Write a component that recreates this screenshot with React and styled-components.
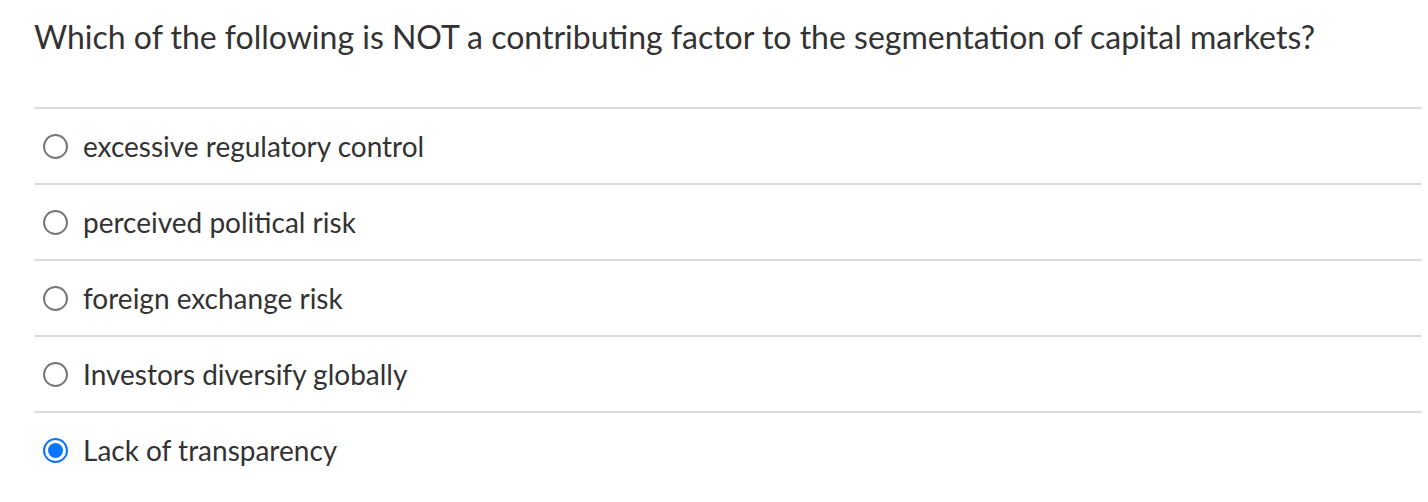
import React, { useState } from "react"
import styled, { createGlobalStyle } from "styled-components"

const GlobalStyle = createGlobalStyle`
  body {
    margin: 0;
    background: #ffffff;
    font-family: Lato, "Open Sans", sans-serif;
    color: #2d3b45;
  }
`

const Page = styled.div`
  padding: 0 6px 0 34px;
`

const Question = styled.h1`
  margin: 0;
  padding-top: 18px;
  height: 107px;
  box-sizing: border-box;
  font-size: 32px;
  line-height: 38px;
  font-weight: 400;
  color: #333333;
`

const Options = styled.div`
  display: flex;
  flex-direction: column;
`

const Row = styled.label`
  display: flex;
  align-items: center;
  gap: 15px;
  height: 76px;
  box-sizing: border-box;
  border-top: 2px solid #dddddd;
  padding-left: 9px;
  cursor: pointer;
`

const Radio = styled.span`
  width: 25px;
  height: 25px;
  box-sizing: border-box;
  border-radius: 50%;
  border: 2px solid ${props => (props.checked ? "#0b74ff" : "#777777")};
  display: flex;
  align-items: center;
  justify-content: center;
  flex-shrink: 0;
  &::after {
    content: "";
    width: 15px;
    height: 15px;
    border-radius: 50%;
    background: ${props => (props.checked ? "#0b74ff" : "transparent")};
  }
`

const Label = styled.span`
  font-size: 28px;
  color: #333333;
  line-height: 32px;
`

const answers = [
  "excessive regulatory control",
  "perceived political risk",
  "foreign exchange risk",
  "Investors diversify globally",
  "Lack of transparency",
]

const App = () => {
  const [selected, setSelected] = useState(4)

  return (
    <Page>
      <GlobalStyle />
      <Question>
        Which of the following is NOT a contributing factor to the segmentation
        of capital markets?
      </Question>
      <Options>
        {answers.map((a, i) => (
          <Row key={a} onClick={() => setSelected(i)}>
            <Radio checked={selected === i} />
            <Label>{a}</Label>
          </Row>
        ))}
      </Options>
    </Page>
  )
}

export default App
